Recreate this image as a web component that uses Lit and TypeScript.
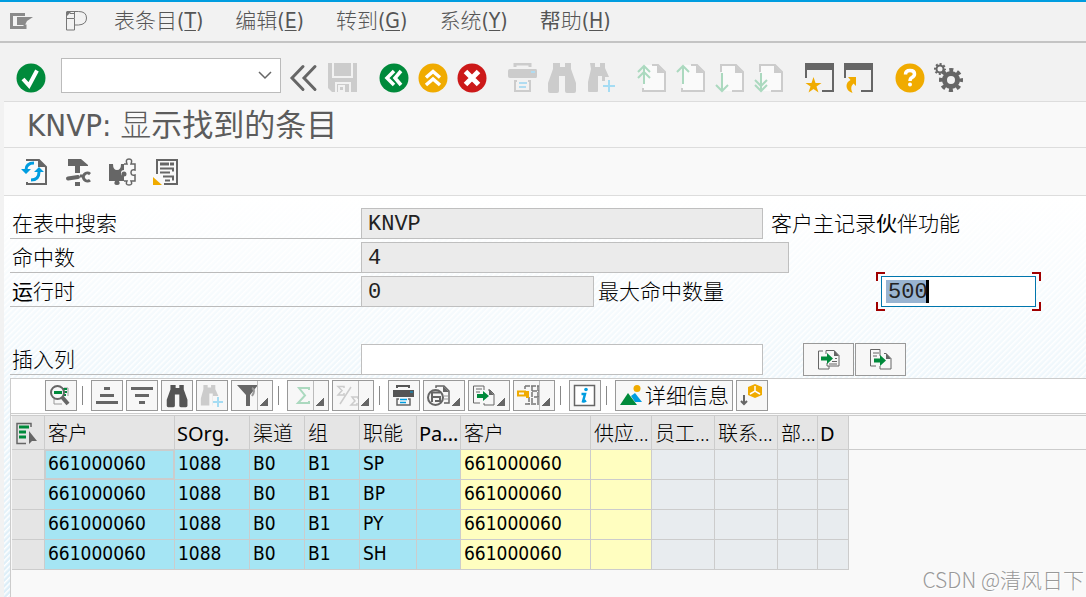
import { LitElement, html, css, svg, nothing, TemplateResult } from "lit";
import { customElement } from "lit/decorators.js";
import { classMap } from "lit/directives/class-map.js";

const PALE = "#ccc";

const icon = (w: number, h: number, body: unknown) =>
  html`<svg width=${w} height=${h} viewBox="0 0 ${w} ${h}" fill="none" aria-hidden="true">${body}</svg>`;

const binoculars = (c: string) => svg`<path fill=${c} d="M7 0h6v4h5V0h6v6l5 14v8q0 2-2 2h-7q-2 0-2-2V13h-6v15q0 2-2 2H3q-2 0-2-2v-8L6 6V0z"/>`;
const smallBinoculars = (c: string) => svg`<path fill=${c} d="M4 0h5v3h4V0h5v5l5 11v8h-8V10h-4v14H1v-8L4 5z"/>`;

const printer = (c: string, ink: string) => svg`
  <path d="M7 4V1h15v3" stroke=${c} stroke-width="3"/>
  <path fill=${c} d="M2 6h26q1 0 1 2v5q0 2-1 2H2q-2 0-2-2V8q0-2 2-2z"/>
  <rect x="23" y="8" width="4" height="2" fill=${ink}/>
  <path d="M9 18H7v10h15V18h-2" stroke=${c} stroke-width="2"/>
  <path d="M11 20h8M11 24h7" stroke=${ink} stroke-width="2"/>`;

const page = (arrow: unknown, up: boolean) => svg`
  <path fill="#fafafa" d="M6 2h15l7 7v19H6z"/>
  <path stroke=${PALE} stroke-width="2" d=${up ? "M15 2h6l7 7v19H6v-3" : "M6 9V2h15l7 7v19H17"}/>
  <path fill=${PALE} d="M20 2l8 8h-8z"/>
  <g stroke="#abd9bf" stroke-width="2">${arrow}</g>`;

const windowFrame = svg`
  <rect x="0" y="0" width="29" height="7" fill="#666"/>
  <path stroke="#666" stroke-width="2" d="M1 6v9M28 6v22H17"/>`;

const icons: Record<string, TemplateResult> = {
  session: icon(24, 18, svg`<path stroke="#8a8a8a" stroke-width="3" d="M15 2.500H1.500v13H15v-3"/><path fill="#8a8a8a" d="M7 5h16l-6 4-2 4H7z"/>`),
  program: icon(24, 22, svg`<path stroke="#777" d="M1.500 1.500h12q8 0 8 6.500t-8 7h-4v5h-8v-18M9.500 1.500v7h-8M5 3.500h4M9.500 15V9"/><path fill="#777" d="M2 2h4L2 6z"/>`),
  ok: icon(30, 30, svg`<circle cx="15" cy="15" r="14.500" fill="#008a3b"/><path d="M7 16l6 6.500 8-15" stroke="#fff" stroke-width="4"/>`),
  less: icon(30, 30, svg`<path d="M14 3.500L3 15l11 11.500M26 3.500L15 15l11 11.500" stroke="#666" stroke-width="3" stroke-linecap="round"/>`),
  save: icon(30, 30, svg`<path fill="#ccc" d="M0 0h29v29H4l-4-4z"/><path stroke="#f2f2f2" stroke-width="2" d="M5 0v14h19V0M8 29V20h14v9M11 28v-5h5v5z"/>`),
  back: icon(30, 30, svg`<circle cx="15" cy="15" r="14.500" fill="#008a3b"/><path d="M15 8l-7 7 7 7M22 8l-6 7 6 7" stroke="#fff" stroke-width="3.500"/>`),
  exit: icon(30, 30, svg`<circle cx="15" cy="15" r="14.500" fill="#f0ab00"/><path d="M8 14.500l7-6 7 6M8 22l7-6 7 6" stroke="#fff" stroke-width="3.500"/>`),
  cancel: icon(30, 30, svg`<circle cx="15" cy="15" r="14.500" fill="#cc1919"/><path d="M8.500 8.500l13 13M21.500 8.500l-13 13" stroke="#fff" stroke-width="5"/>`),
  print: icon(30, 30, printer(PALE, "#b0dcf1")),
  find: icon(30, 30, binoculars(PALE)),
  findNext: icon(30, 30, svg`<path fill="#ccc" d="M4 0h5v4h5V0h5v5l4 9h-4v4h-3v-5h-4v15q0 1-1 1H3q-1 0-1-1v-9L5 6z"/><path d="M17 23h12M23 17v12" stroke="#a5dcf3" stroke-width="2"/>`),
  first: icon(30, 30, page(svg`<path d="M7 21V3M1 9l6-6 6 6M1 15l6-6 6 6"/>`, true)),
  previous: icon(30, 30, page(svg`<path d="M7 21V3M1 9l6-6 6 6"/>`, true)),
  next: icon(30, 30, page(svg`<path d="M7 10v18M1 22l6 6 6-6"/>`, false)),
  last: icon(30, 30, page(svg`<path d="M7 10v18M1 22l6 6 6-6M1 17l6 6 6-6"/>`, false)),
  newSession: icon(30, 30, svg`${windowFrame}<path fill="#f0ab00" d="M8.500 14l2 6h6l-5 3.500 2 6-5-3.500-5 3.500 2-6-5-3.500h6z"/>`),
  shortcut: icon(30, 30, svg`${windowFrame}<path fill="#f0ab00" d="M4 14h8v9l-2.500-2.500q-4 4-1 9.500-6-2-6-7 0-4 4-6z"/>`),
  help: icon(30, 30, svg`<circle cx="15" cy="15" r="14.500" fill="#f0ab00"/><path d="M10.500 11.500q0-4 4.500-4t4.500 3.500q0 2-2.500 3.500-2 1-2 3.500" stroke="#fff" stroke-width="3.500"/><circle cx="15" cy="21.500" r="2" fill="#fff"/>`),
  settings: icon(30, 30, svg`
    <circle cx="17" cy="17" r="6.500" stroke="#666" stroke-width="5"/>
    <circle cx="17" cy="17" r="10" stroke="#666" stroke-width="4" stroke-dasharray="4 3.850" stroke-dashoffset="2"/>
    <circle cx="6" cy="6" r="3.500" stroke="#666" stroke-width="2"/>
    <circle cx="6" cy="6" r="5" stroke="#666" stroke-width="2" stroke-dasharray="2 1.930" stroke-dashoffset="1"/>`),

  refresh: icon(28, 28, svg`
    <path stroke="#666" stroke-width="2" d="M6 3V2h12l7 7v17H6v-2"/><path fill="#666" d="M17 1l8 8h-8z"/>
    <g stroke="#009de0" stroke-width="3"><path d="M5 12q0-7 8-7M18 14q0 8-8 8"/></g>
    <path fill="#009de0" d="M0 11h10l-5 5zM13 14l5-5 5 5z"/>`),
  tools: icon(28, 28, svg`
    <path fill="#666" d="M3 1h13l7 6v1h-8v7h-5V8H3zM10 24h5v4h-5z"/>
    <path d="M3 20.500l10-1.500" stroke="#666" stroke-width="4" stroke-linecap="round"/>
    <path d="M25 16a4 4 0 1 0 0 6M15 18h4" stroke="#666" stroke-width="3"/>`),
  puzzle: icon(28, 28, svg`
    <path fill="#666" d="M0 6h4q0 6 4 6t4-6h3v6q-3 0-3 3t3 3v5h-5q2 4-2 4t-2-4H0z"/>
    <path d="M15 6h3q-2-5 2-5t2 5h4v6q-4-1-4 2.500t4 2.500v6h-4q2 4-2 4t-2-4h-3" stroke="#666" stroke-width="1.500"/><circle cx="15" cy="16" r="2.500" fill="#666"/>`),
  list: icon(28, 28, svg`
    <path d="M4 16V2h20v24H11" stroke="#666" stroke-width="2"/>
    <path d="M7 6h9" stroke="#666" stroke-width="3"/><path d="M7 10.500h13v3M7 14.500h10M10 18.500h10v4M12 22.500h5" stroke="#666" stroke-width="2"/>
    <path d="M17 4.500h4v3h-4z" fill="#666"/><path d="M0 19l9 8H0z" fill="#f0ab00"/>`),

  insertIn: icon(24, 24, svg`
    <path d="M6 3H1.500v18H12v-3M9 6V2.500h8l5 5V18H10v-3" stroke="#666"/><path d="M17 2v6h5z" fill="#666"/>
    <path d="M18 10.500h2M15 13.500h5M12 16h8" stroke="#666"/><path fill="#008a3b" d="M4 8.500h6V5l6 5.500-6 5.500v-3.500H4z"/>`),
  insertOut: icon(24, 24, svg`
    <path d="M11 8V1.500H1.500V18H7M15 5.500h2l5 5V21H11v-3" stroke="#666"/><path d="M17 5v6h5z" fill="#666"/>
    <path d="M4 5h6M4 8h4" stroke="#666"/><path fill="#008a3b" d="M5 10.500h6V7l6 5.500-6 5.500v-3.500H5z"/>`),

  details: icon(24, 24, svg`
    <path d="M15 4h4v8M5 15v5h8" stroke="#999"/><path d="M14 5h4M14 8h4M14 11h3" stroke="#008a3b" stroke-width="2"/>
    <circle cx="8.500" cy="8.500" r="6.500" stroke="#666" stroke-width="2" fill="#f7f7f7"/>
    <path d="M5 8.500h8" stroke="#008a3b" stroke-width="3"/><path d="M13 13l6 7" stroke="#666" stroke-width="4"/>`),
  sortUp: icon(24, 24, svg`<path d="M9 4.500h6M5 11.500h14M1 18.500h22" stroke="#666" stroke-width="3"/>`),
  sortDown: icon(24, 24, svg`<path d="M1 4.500h22M5 11.500h14M9 18.500h6" stroke="#666" stroke-width="3"/>`),
  gridFind: icon(24, 24, svg`<g transform="translate(1 1) scale(.74)">${binoculars("#555")}</g>`),
  gridFindNext: icon(24, 24, svg`<g transform="translate(0 1) scale(.85)">${smallBinoculars(PALE)}</g><rect x="13" y="12" width="11" height="11" fill="#f7f7f7"/><path d="M13 18h10M18 13v10" stroke="#a5dcf3" stroke-width="2"/>`),
  filter: icon(24, 24, svg`<path fill="#666" d="M2 1h21l-8 10v11h-4V11z"/><path d="M17 4q4 2 0 8" stroke="#999" stroke-width="2"/>`),
  sum: icon(24, 24, svg`<path d="M18 6V4H8l6 7.500L7 19h11v-2" stroke="#abd9bf" stroke-width="2"/>`),
  subtotal: icon(24, 24, svg`<path d="M8 4V2.500H2L6 6.500l-4 4.500h6V9M22 15v-2h-6l3 4-4 4h6v-2M15 3L4 20" stroke="#ccc" stroke-width="1.500"/>`),
  gridPrint: icon(24, 24, svg`<path d="M5 4V2h12v2" stroke="#555" stroke-width="2"/><path fill="#555" d="M1 6h21v7H1z"/><path d="M18 8h3" stroke="#009de0"/><path d="M7 15H5v6h13v-6h-2" stroke="#666" stroke-width="1.500"/><path d="M8 15.500h7M8 18.500h6" stroke="#009de0" stroke-width="1.500"/>`),
  views: icon(24, 24, svg`
    <path d="M9 4V2h8l5 5v12h-5" stroke="#666" stroke-width="1.500"/><path d="M16 2v6h6z" fill="#666"/><path d="M17 12h4M17 15h4" stroke="#999"/>
    <circle cx="8.500" cy="13.500" r="7.500" stroke="#666" stroke-width="2"/><path d="M5 18V8.500h8M5 13h8v4H8" stroke="#666" stroke-width="2"/>`),
  export: icon(24, 24, svg`
    <path d="M12 6V2H1.500v17H8M16 6h2l4 4v11H12v-2" stroke="#666"/><path d="M17 5v6h5z" fill="#666"/>
    <path d="M4 5h6M4 8h4" stroke="#666"/><path fill="#008a3b" d="M5 10h6V7l6 5-6 5v-3H5z"/>`),
  layout: icon(24, 24, svg`
    <path d="M8 2h14M8 5V2M15 2v18M21 2v18M15 7h7M17 13h5M8 20h14M12 13v7" stroke="#777" stroke-width="1.500" stroke-dasharray="5 1"/>
    <path d="M1 7.500h7v4H1z" stroke="#f0ab00" stroke-width="2"/><path d="M9 7h3v7H9z" fill="#f0ab00"/>`),
  info: icon(24, 24, svg`
    <path d="M1.500 1.500h20v20h-20z" stroke="#666" stroke-width="1.500" fill="#fff"/>
    <circle cx="13" cy="5.500" r="1.800" fill="#009de0"/><path d="M8.500 10h3.500l-2 7.500q1 .500 3-1" stroke="#009de0" stroke-width="2.500"/>`),
  picture: icon(24, 24, svg`<path fill="#009de0" d="M16 9l7 9h-7l-4-6z"/><path fill="#008a3b" d="M9 9l9 12H1z"/><circle cx="18" cy="4.500" r="3.500" fill="#f0ab00"/>`),
  cube: icon(24, 24, svg`<path d="M4 11v9M1 17l3 3 3-3" stroke="#666" stroke-width="2"/><path fill="#f0ab00" d="M15 0l7 3v8l-7 3-7-3V3z"/><path d="M15 2v6M10 10l5-3 5 3" stroke="#fff" stroke-width="1.500"/>`),
  select: icon(24, 24, svg`<path d="M16 5V1.500H2v20h9" stroke="#666" stroke-width="1.500"/><path d="M4 5h10M4 10h7M4 15h7" stroke="#008a3b" stroke-width="3"/><path fill="#666" d="M14 9l8 10h-5l-3 3z"/>`),
};

interface Tool { id: string; label: string; menu?: boolean; split?: boolean; text?: string; off?: boolean; }

const systemGroups: Tool[][] = [
  [{ id: "less", label: "收起" }, { id: "save", label: "保存", off: true }],
  [{ id: "back", label: "返回" }, { id: "exit", label: "退出" }, { id: "cancel", label: "取消" }],
  [{ id: "print", label: "打印", off: true }, { id: "find", label: "查找", off: true }, { id: "findNext", label: "继续查找", off: true }],
  [{ id: "first", label: "首页", off: true }, { id: "previous", label: "上一页", off: true }, { id: "next", label: "下一页", off: true }, { id: "last", label: "末页", off: true }],
  [{ id: "newSession", label: "新建会话" }, { id: "shortcut", label: "创建快捷方式" }],
  [{ id: "help", label: "帮助" }, { id: "settings", label: "定制本地布局" }],
];

const gridGroups: Tool[][] = [
  [{ id: "details", label: "明细" }],
  [{ id: "sortUp", label: "升序" }, { id: "sortDown", label: "降序" }, { id: "gridFind", label: "查找" }, { id: "gridFindNext", label: "继续查找", off: true }, { id: "filter", label: "过滤器", menu: true, split: true }],
  [{ id: "sum", label: "总计", menu: true, split: true }, { id: "subtotal", label: "小计", menu: true, split: true }],
  [{ id: "gridPrint", label: "打印" }, { id: "views", label: "视图", menu: true }, { id: "export", label: "导出", menu: true }, { id: "layout", label: "布局", menu: true, split: true }],
  [{ id: "info", label: "信息" }],
  [{ id: "picture", label: "详细信息", text: "详细信息" }, { id: "cube", label: "数据" }],
];

const columns = [
  { name: "客户", cls: "w130" }, { name: "SOrg.", cls: "w75 latin" }, { name: "渠道", cls: "w55" },
  { name: "组", cls: "w55" }, { name: "职能", cls: "w57" }, { name: "Pa...", cls: "w44 latin" },
  { name: "客户", cls: "w130" }, { name: "供应...", cls: "w61" }, { name: "员工...", cls: "w63" },
  { name: "联系...", cls: "w63" }, { name: "部...", cls: "w40" }, { name: "D", cls: "w31 latin" },
];
const rows = ["SP", "BP", "PY", "SH"].map((role) => ["661000060", "1088", "B0", "B1", role, "", "661000060", "", "", "", "", ""]);

@customElement("app-root")
export class AppRoot extends LitElement {
  static styles = css`
    :host { display: flex; flex-direction: column; min-height: 100vh; position: relative; overflow: hidden;
      background: #f2f2f2; color: #000;
      font: 19px/24px "DejaVu Sans Condensed", "Noto Sans", "Noto Sans CJK SC", sans-serif; }
    * { box-sizing: border-box; }
    svg { display: block; flex: none; }
    button, input, select { font: inherit; color: inherit; margin: 0; padding: 0; border-radius: 0; outline: none; }
    button { background: none; border: 0; display: flex; align-items: center; }
    .menubar { display: flex; align-items: center; gap: 32px; height: 43px; padding: 0 10px 2px;
      border-top: 2px solid #009de0; border-bottom: 2px solid #c4c4c4; color: #555; white-space: nowrap; }
    .menubar button { font-size: 21px; font-weight: 300; }
    .menubar u { text-underline-offset: 2px; text-decoration-thickness: 1px; }
    .lead { display: flex; align-items: center; gap: 31px; width: 72px; }
    .body { display: flex; flex-direction: column; flex: 1; margin-left: 4px; background: #f9f9f9; }
    .system { display: flex; align-items: center; height: 59px; padding: 11px 12px 0; background: #f2f2f2; border-bottom: 1px solid #ddd; }
    .command { position: relative; width: 220px; margin: 0 8px 4px 15px; }
    .command select { display: block; width: 100%; height: 35px; appearance: none; background: #fff; border: 1px solid #bbb; }
    .command svg { position: absolute; right: 9px; top: 13px; pointer-events: none; }
    .groups { display: flex; gap: 21px; }
    .group { display: flex; gap: 9px; }
    h1 { margin: 0; height: 46px; padding: 0 23px; font-size: 31px; line-height: 46px; font-weight: 400; color: #5c5c5c; border-bottom: 1px solid #ddd; white-space: nowrap; }
    .light { font-weight: 300; }
    .apps { display: flex; align-items: center; gap: 16px; height: 48px; padding: 0 17px; border-bottom: 1px solid #ddd; }
    .work { flex: 1; display: flex; flex-direction: column; padding: 12px 0 0 6px;
      background: linear-gradient(#fff, rgba(255, 255, 255, 0) 400px), repeating-linear-gradient(-45deg, #dceef8 0 1px, #fff 3px, #dceef8 4px); }
    form { display: grid; gap: 3px; font-size: 21px; font-weight: 300; }
    .row { display: flex; height: 31px; align-items: flex-end; white-space: nowrap; }
    .row .name { width: 351px; height: 31px; flex: none; line-height: 32px; padding-left: 2px; border-bottom: 1px solid #bbb; }
    .row .note { height: 31px; line-height: 32px; padding-left: 8px; }
    .row .max { width: 287px; padding-left: 4px; }
    input { height: 31px; padding: 2px 6px 0; border: 1px solid #bfbfbf; background: #fff; font: 22px "Liberation Mono", monospace; color: #222; }
    input[readonly] { background: #ebebeb; }
    .f402 { width: 402px; } .f428 { width: 428px; } .f233 { width: 233px; }
    .insert { margin-top: 34px; }
    .focus { position: relative; display: flex; width: 155px; height: 31px; background: #fff; border: 1px solid #0076ad; }
    .focus input { position: relative; width: 100%; height: 29px; border: 0; background: none; }
    .focus .mark { position: absolute; left: 4px; top: 3px; width: 43px; height: 23px; background: #99b4d1; border-right: 3px solid #000; }
    .focus .corners { position: absolute; left: -6px; top: -5px; }
    .move { display: flex; gap: 1px; margin: 0 0 -1px 40px; }
    .move button { width: 51px; height: 33px; justify-content: center; background: #f7f7f7; border: 1px solid #999; }
    .grid { flex: 1; margin-top: 3px; border: solid #ccc; border-width: 1px 0 0 1px; background: #f9f9f9; }
    .gridbar { display: flex; gap: 3px; height: 35px; padding: 1px 0 0 34px; background: #fff; border-bottom: 1px solid #ccc; }
    .gridbar button { position: relative; height: 31px; padding: 0 3px; gap: 2px; border: 1px solid #999; background: #f7f7f7; white-space: nowrap; font-size: 21px; font-weight: 300; }
    .gridbar .plain { width: 32px; }
    .gridbar .menu { width: 42px; }
    .gridbar .menu::after { content: ""; position: absolute; right: 4px; bottom: 4px; width: 8px; height: 8px; background: linear-gradient(135deg, transparent 50%, #666 50%); }
    .gridbar .split::before { content: ""; position: absolute; right: 14px; top: 0; bottom: 0; border-left: 1px solid #bbb; }
    .gridbar .wide { width: 118px; }
    .sep { width: 8px; height: 19px; margin-top: 6px; padding-left: 2px; }
    .sep::before { content: ""; display: block; width: 1px; height: 19px; background: #888; }
    .sheet { display: flex; margin-top: 1px; padding-left: 1px; border-top: 1px solid #ccc; }
    .rest { flex: 1; height: 34px; border-bottom: 1px solid #ccc; }
    table { table-layout: fixed; width: 837px; border-spacing: 0; text-align: left; }
    th, td { height: 30px; padding: 0 0 2px 3px; overflow: hidden; white-space: nowrap; line-height: 27px; border: solid #ccc; border-width: 0 1px 1px 0; background: #e8ecef; }
    thead th { height: 34px; padding: 2px 0 0 3px; background: #e5e5e5; font-family: "Noto Sans", "Noto Sans CJK SC", sans-serif; font-size: 20px; font-weight: 300; }
    thead .latin { font-weight: 400; padding-left: 2px; }
    tbody th { background: #e5e5e5; }
    .key { background: #a5e5f4; } .val { background: #fffec0; }
    .active { box-shadow: inset 1px 1px #ccc, inset -1px -1px #ccc; }
    .w33 { width: 33px; } .w130 { width: 130px; } .w75 { width: 75px; } .w55 { width: 55px; } .w57 { width: 57px; }
    .w44 { width: 44px; } .w61 { width: 61px; } .w63 { width: 63px; } .w40 { width: 40px; } .w31 { width: 31px; }
    .credit { position: absolute; right: 2px; bottom: 5px; font: 300 21px/26px "Noto Sans CJK SC", sans-serif; color: #999; text-shadow: 1px 1px #fff; }
  `;

  private menu(name: unknown, key: string) {
    return html`<button type="button">${name}(<u>${key}</u>)</button>`;
  }

  private tool(t: Tool) {
    return html`<button type="button" aria-label=${t.label} title=${t.label} aria-disabled=${t.off ? "true" : "false"}
      class=${classMap({ plain: !t.menu && !t.text, menu: !!t.menu, split: !!t.split, wide: !!t.text })}>${icons[t.id]}${t.text ? html`<span>${t.text}</span>` : nothing}</button>`;
  }

  private bare(id: string, label: string) {
    return html`<button type="button" aria-label=${label} title=${label}>${icons[id]}</button>`;
  }

  render() {
    return html`
      <nav class="menubar">
        <span class="lead">${this.bare("session", "会话")}${this.bare("program", "程序")}</span>
        ${this.menu("表条目", "T")}${this.menu("编辑", "E")}${this.menu("转到", "G")}${this.menu("系统", "Y")}${this.menu(html`<b>帮</b>助`, "H")}
      </nav>
      <main class="body">
        <div class="system">
          ${this.bare("ok", "回车")}
          <div class="command">
            <select aria-label="命令"><option></option></select>
            ${icon(14, 9, svg`<path d="M1 1l6 6 6-6" stroke="#666" stroke-width="1.500"/>`)}
          </div>
          <div class="groups">${systemGroups.map((g) => html`<div class="group">${g.map((t) => this.bare(t.id, t.label))}</div>`)}</div>
        </div>
        <h1>KNVP: <span class="light">显</span>示找到的条目</h1>
        <div class="apps">${this.bare("refresh", "刷新")}${this.bare("tools", "工具")}${this.bare("puzzle", "扩展")}${this.bare("list", "列表")}</div>
        <div class="work">
          <form @submit=${(e: Event) => e.preventDefault()}>
            <div class="row"><label class="name" for="table">在表中搜索</label><input id="table" class="f402" readonly .value=${"KNVP"} /><span class="note">客户主记录<b>伙</b>伴功能</span></div>
            <div class="row"><label class="name" for="hits">命中数</label><input id="hits" class="f428" readonly .value=${"4"} /></div>
            <div class="row"><label class="name" for="time"><b>运</b>行时</label><input id="time" class="f233" readonly .value=${"0"} />
              <label class="note max" for="limit">最大命中数量</label>
              <span class="focus"><span class="mark"></span><input id="limit" .value=${"500"} />
                <svg class="corners" width="165" height="39" viewBox="0 0 165 39" fill="none" pointer-events="none"><path stroke="#a00000" stroke-width="2" d="M1 9V1h8M156 1h8v8M164 30v8h-8M9 38H1v-8"/></svg></span></div>
            <div class="row insert"><label class="name" for="column">插入列</label><input id="column" class="f402" />
              <span class="move">${this.bare("insertIn", "插入")}${this.bare("insertOut", "移出")}</span></div>
          </form>
          <section class="grid">
            <div class="gridbar">${gridGroups.map((g, i) => html`${i ? html`<span class="sep"></span>` : nothing}${g.map((t) => this.tool(t))}`)}</div>
            <div class="sheet">
              <table>
                <thead><tr><th class="w33">${this.bare("select", "全选")}</th>${columns.map((c) => html`<th class=${c.cls}>${c.name}</th>`)}</tr></thead>
                <tbody>${rows.map((r, y) => html`<tr><th></th>${r.map((v, x) => html`<td class=${classMap({ key: x < 6, val: x === 6 || x === 7, active: !x && !y })}>${v}</td>`)}</tr>`)}</tbody>
              </table>
              <div class="rest"></div>
            </div>
          </section>
        </div>
      </main>
      <div class="credit">CSDN @清风日下</div>
    `;
  }
}
